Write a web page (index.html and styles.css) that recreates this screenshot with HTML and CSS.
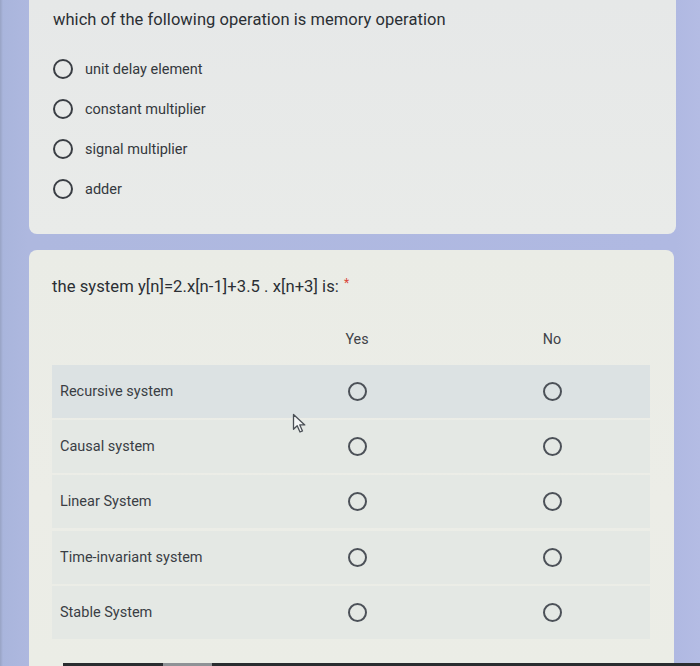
FILE: index.html
```html
<!DOCTYPE html>
<html lang="en">
<head>
<meta charset="utf-8">
<title>Form</title>
<link rel="stylesheet" href="styles.css">
</head>
<body>
<main class="page">
  <section class="card card-top">
    <h2 class="q-title">which of the following operation is memory operation</h2>
    <ul class="options">
      <li class="option"><span class="radio big"></span><span>unit delay element</span></li>
      <li class="option"><span class="radio big"></span><span>constant multiplier</span></li>
      <li class="option"><span class="radio big"></span><span>signal multiplier</span></li>
      <li class="option"><span class="radio big"></span><span>adder</span></li>
    </ul>
  </section>

  <section class="card card-grid">
    <h2 class="q-title q2">the system y[n]=2.x[n-1]+3.5 . x[n+3] is: <span class="req">*</span></h2>
    <div class="grid">
      <div class="head"><span></span><span class="col">Yes</span><span class="col">No</span></div>
      <div class="row"><span class="lbl">Recursive system</span><span class="col"><span class="radio"></span></span><span class="col"><span class="radio"></span></span></div>
      <div class="row"><span class="lbl">Causal system</span><span class="col"><span class="radio"></span></span><span class="col"><span class="radio"></span></span></div>
      <div class="row"><span class="lbl">Linear System</span><span class="col"><span class="radio"></span></span><span class="col"><span class="radio"></span></span></div>
      <div class="row"><span class="lbl">Time-invariant system</span><span class="col"><span class="radio"></span></span><span class="col"><span class="radio"></span></span></div>
      <div class="row"><span class="lbl">Stable System</span><span class="col"><span class="radio"></span></span><span class="col"><span class="radio"></span></span></div>
    </div>
    <svg class="cursor" width="15" height="21" viewBox="0 0 15 21" aria-hidden="true">
      <path d="M1.5 1.5 L1.5 16.3 L5.2 12.8 L8 19 L10.5 17.9 L7.8 11.9 L12.8 11.9 Z" fill="#f4f6f6" stroke="#4a4f55" stroke-width="1.3" stroke-linejoin="round"/>
    </svg>
  </section>
  <div class="bezel"><span class="seg light"></span></div>
</main>
</body>
</html>
```

FILE: styles.css
```css
* { box-sizing: border-box; }
html, body { margin: 0; padding: 0; }
body {
  width: 700px;
  height: 666px;
  overflow: hidden;
  background: linear-gradient(90deg, #98a3c4 0, #a9b5dc 3px, #aeb8df 28px, #b0b9e2 676px, #b4bce4 700px);
  font-family: Roboto, "Noto Sans", Arial, sans-serif;
  color: #3a3e44;
}
.page {
  position: relative;
  height: 666px;
  padding: 0 24px 0 29px;
  display: flex;
  flex-direction: column;
  gap: 16px;
}
.card {
  background: #e9ebe8;
  border-radius: 8px;
}
.card-top {
  width: 647px;
  height: 234px;
  border-radius: 0 0 8px 8px;
  padding: 9px 24px 0 24px;
  background: linear-gradient(180deg, #e6e8e8 0, #e9ebe9 100%);
}
.q-title {
  margin: 0;
  font-size: 16.5px;
  font-weight: 400;
  line-height: 22px;
  color: #2b2f34;
  letter-spacing: 0.05px;
}
.options {
  list-style: none;
  margin: 18px 0 0 0;
  padding: 0;
  display: flex;
  flex-direction: column;
}
.option {
  height: 40px;
  display: flex;
  align-items: center;
  gap: 12px;
  font-size: 14.5px;
  color: #34383d;
}
.radio {
  display: inline-block;
  width: 19px;
  height: 19px;
  border: 2px solid #4c5158;
  border-radius: 50%;
  flex: none;
}
.radio.big {
  width: 20px;
  height: 20px;
  border-width: 2.4px;
  border-color: #3a3e44;
}
.card-grid {
  position: relative;
  width: 645px;
  flex: 1;
  border-radius: 8px 8px 0 0;
  padding: 21px 24px 0 23px;
  background: linear-gradient(180deg, #eaece6 0, #ecede7 60%, #ebede6 100%);
}
.q2 {
  line-height: 24px;
  font-size: 16.6px;
}
.req {
  color: #d9473a;
  font-size: 12px;
  vertical-align: 5px;
  margin-left: 1px;
}
.grid {
  margin-top: 20px;
  width: 598px;
  display: flex;
  flex-direction: column;
  gap: 2.3px;
}
.head, .row {
  display: grid;
  grid-template-columns: 208px 194px 196px;
  align-items: center;
}
.head {
  height: 43.5px;
  font-size: 14.3px;
  color: #3f4348;
  padding-bottom: 3px;
}
.row {
  height: 53px;
  background: #e4e8e4;
  font-size: 14.5px;
  color: #3a3e44;
}
.head + .row { background: #dce2e3; }
.lbl { padding-left: 8px; }
.col {
  display: flex;
  justify-content: center;
  align-items: center;
}
.cursor {
  position: absolute;
  left: 263px;
  top: 163px;
}
.bezel {
  position: absolute;
  left: 63px;
  right: 0;
  bottom: 0;
  height: 3px;
  background: #2a2d30;
}
.seg.light {
  position: absolute;
  left: 100px;
  width: 49px;
  top: 0;
  height: 3px;
  background: #8e9296;
}
```
